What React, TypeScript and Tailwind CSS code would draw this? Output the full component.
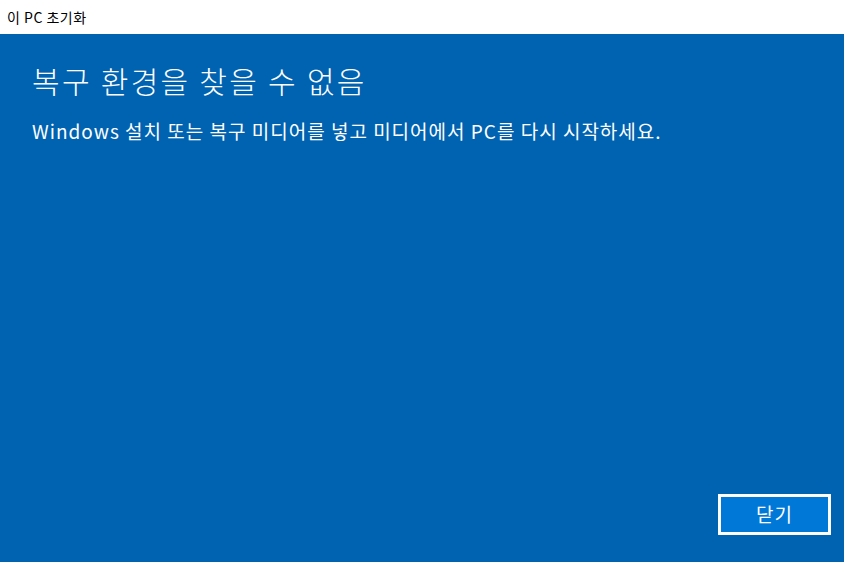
import React from "react";

export default function App() {
  const font = { fontFamily: '"Noto Sans CJK KR", "Noto Sans", sans-serif' };
  return (
    <div className="w-[844px] h-[562px] flex flex-col overflow-hidden" style={font}>
      <div className="h-[34px] bg-white flex items-center px-[7px] text-[14px] tracking-[0.5px] text-black shrink-0">
        이 PC 초기화
      </div>
      <div className="flex-1 bg-[#0063b1] flex flex-col px-[32px] pt-[26px] pb-[27px] text-white">
        <h1 className="text-[30px] leading-[40px] tracking-[2.3px] font-light whitespace-nowrap">복구 환경을 찾을 수 없음</h1>
        <p className="mt-[18px] text-[19px] leading-[26px] tracking-[1px] whitespace-nowrap">
          Windows 설치 또는 복구 미디어를 넣고 미디어에서 PC를 다시 시작하세요.
        </p>
        <div className="flex-1" />
        <div className="flex justify-end -mr-[19px]">
          <button className="w-[113px] h-[41px] border-[3px] border-white bg-[#0078d7] text-white text-[19px] tracking-[1px] flex items-center justify-center">
            닫기
          </button>
        </div>
      </div>
    </div>
  );
}
